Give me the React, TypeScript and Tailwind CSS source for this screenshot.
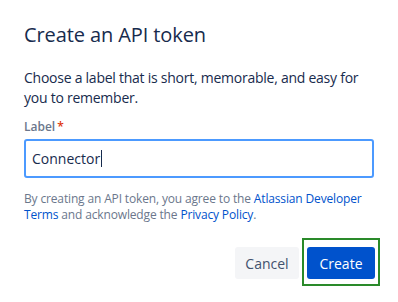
export default function App() {
  return (
    <div className="w-[398px] h-[302px] bg-white px-6 font-['Open_Sans',sans-serif] text-[#172B4D]">
      {/* Header */}
      <h2 className="pt-[23px] text-[20px] leading-6 font-medium tracking-[-0.1px]">Create an API token</h2>

      {/* Description */}
      <p className="mt-[21px] text-[14px] leading-5 tracking-[-0.25px]">
        Choose a label that is short, memorable, and easy for you to remember.
      </p>

      {/* Label field */}
      <div className="mt-[11px]">
        <label className="block text-[12px] leading-4 font-semibold text-[#6B778C]">
          Label<span className="ml-[2px] text-[#DE350B]">*</span>
        </label>
        <div className="mt-[4px] h-[39px] border-2 border-[#4C9AFF] rounded-[3px] px-[6px] flex items-center text-[14px] text-[#172B4D]">
          Connector
          <span className="inline-block w-px h-[17px] bg-[#172B4D] ml-px" />
        </div>
      </div>

      {/* Terms */}
      <div className="mt-[13px] text-[12px] leading-4 text-[#6B778C] tracking-[-0.15px]">
        <div>
          By creating an API token, you agree to the <a className="text-[#0052CC]">Atlassian Developer</a>
        </div>
        <div>
          <a className="text-[#0052CC]">Terms</a> and acknowledge the <a className="text-[#0052CC]">Privacy Policy</a>.
        </div>
      </div>

      {/* Actions */}
      <div className="mt-[24px] flex justify-end gap-2 -mr-px">
        <button className="h-8 w-[64px] rounded-[3px] bg-[#F4F5F7] text-[14px] font-medium text-[#42526E]">
          Cancel
        </button>
        <div className="relative">
          <button className="h-8 w-[68px] rounded-[3px] bg-[#0052CC] text-[14px] font-medium text-white">
            Create
          </button>
          <div className="absolute -left-[5px] -top-[9px] w-[78px] h-[48px] border-2 border-[#2A8A2A] pointer-events-none" />
        </div>
      </div>
    </div>
  );
}
